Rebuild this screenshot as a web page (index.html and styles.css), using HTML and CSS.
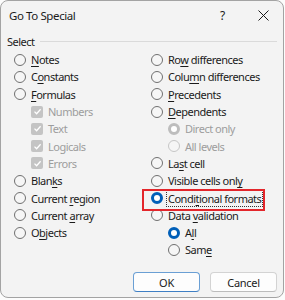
FILE: index.html
```html
<!DOCTYPE html>
<html>
<head>
<meta charset="utf-8">
<link rel="stylesheet" href="styles.css">
</head>
<body>
<div class="dialog">
  <div class="titlebar">
    <span class="title">Go To Special</span>
    <span class="help">?</span>
    <span class="close"><svg width="11" height="11" viewBox="0 0 11 11"><path d="M0.5 0.5L10.5 10.5M10.5 0.5L0.5 10.5" stroke="#1a1a1a" stroke-width="1"/></svg></span>
  </div>
  <div class="group-label"><span>Select</span><span class="rule"></span></div>
  <div class="columns">
    <div class="col">
      <div class="row"><span class="radio"></span><span class="lbl"><u>N</u>otes</span></div>
      <div class="row"><span class="radio"></span><span class="lbl">C<u>o</u>nstants</span></div>
      <div class="row"><span class="radio"></span><span class="lbl"><u>F</u>ormulas</span></div>
      <div class="row sub"><span class="check"><svg width="9" height="9" viewBox="0 0 9 9"><path d="M1.5 4.6L3.6 6.7L7.6 2.3" fill="none" stroke="#fff" stroke-width="1.3"/></svg></span><span class="lbl dis">Numbers</span></div>
      <div class="row sub"><span class="check"><svg width="9" height="9" viewBox="0 0 9 9"><path d="M1.5 4.6L3.6 6.7L7.6 2.3" fill="none" stroke="#fff" stroke-width="1.3"/></svg></span><span class="lbl dis">Text</span></div>
      <div class="row sub"><span class="check"><svg width="9" height="9" viewBox="0 0 9 9"><path d="M1.5 4.6L3.6 6.7L7.6 2.3" fill="none" stroke="#fff" stroke-width="1.3"/></svg></span><span class="lbl dis">Logicals</span></div>
      <div class="row sub"><span class="check"><svg width="9" height="9" viewBox="0 0 9 9"><path d="M1.5 4.6L3.6 6.7L7.6 2.3" fill="none" stroke="#fff" stroke-width="1.3"/></svg></span><span class="lbl dis">Errors</span></div>
      <div class="row"><span class="radio"></span><span class="lbl">Blan<u>k</u>s</span></div>
      <div class="row"><span class="radio"></span><span class="lbl">Current <u>r</u>egion</span></div>
      <div class="row"><span class="radio"></span><span class="lbl">Current <u>a</u>rray</span></div>
      <div class="row"><span class="radio"></span><span class="lbl">O<u>b</u>jects</span></div>
    </div>
    <div class="col">
      <div class="row"><span class="radio"></span><span class="lbl">Ro<u>w</u> differences</span></div>
      <div class="row"><span class="radio"></span><span class="lbl">Colu<u>m</u>n differences</span></div>
      <div class="row"><span class="radio"></span><span class="lbl"><u>P</u>recedents</span></div>
      <div class="row"><span class="radio"></span><span class="lbl"><u>D</u>ependents</span></div>
      <div class="row sub"><span class="radio dis-on"></span><span class="lbl dis">Direct only</span></div>
      <div class="row sub"><span class="radio dis-off"></span><span class="lbl dis">All levels</span></div>
      <div class="row"><span class="radio"></span><span class="lbl">La<u>s</u>t cell</span></div>
      <div class="row"><span class="radio"></span><span class="lbl">Visible cells onl<u>y</u></span></div>
      <div class="row highlight"><span class="radio on"></span><span class="lbl focus">Condi<u>t</u>ional formats</span></div>
      <div class="row"><span class="radio"></span><span class="lbl">Data <u>v</u>alidation</span></div>
      <div class="row sub"><span class="radio on"></span><span class="lbl">A<u>l</u>l</span></div>
      <div class="row sub"><span class="radio"></span><span class="lbl">Sam<u>e</u></span></div>
    </div>
  </div>
  <div class="buttons">
    <button class="btn primary">OK</button>
    <button class="btn">Cancel</button>
  </div>
</div>
</body>
</html>
```

FILE: styles.css
```css
* { box-sizing: border-box; }
html, body { margin: 0; padding: 0; background: #fcfcfc; }
body {
  font-family: "Noto Sans", "Open Sans", sans-serif;
  font-size: 11px;
  letter-spacing: -0.5px;
  color: #1b1b1b;
}
.dialog {
  width: 284px;
  height: 298px;
  border: 1px solid #a3a3a3;
  border-radius: 8px;
  background: #f3f3f3;
  display: flex;
  flex-direction: column;
  overflow: hidden;
}
.titlebar {
  height: 28px;
  display: flex;
  align-items: center;
  padding-left: 8px;
  font-size: 11.5px;
  letter-spacing: -0.4px;
}
.title { flex: 1; }
.help { width: 14px; margin-right: 24px; font-size: 12px; }
.close { width: 11px; height: 11px; margin-right: 14px; display: flex; }
.group-label {
  display: flex;
  align-items: center;
  gap: 5px;
  margin-left: 6px;
  margin-right: 6px;
  height: 24px;
}
.rule { flex: 1; height: 1px; background: #dadada; }
.columns {
  display: grid;
  grid-template-columns: 137px 1fr;
  padding-left: 13px;
  margin-top: -2px;
}
.row {
  height: 17.3px;
  display: flex;
  align-items: center;
  gap: 5px;
  white-space: nowrap;
}
.row.sub { padding-left: 17px; }
.lbl u { text-decoration-thickness: 1px; text-underline-offset: 2px; }
.lbl.dis { color: #9d9d9d; }
.radio {
  width: 12px;
  height: 12px;
  border-radius: 50%;
  border: 1px solid #707070;
  background: #f6f6f6;
  flex: none;
}
.radio.on {
  border: 3.5px solid #005fb8;
  background: #fff;
}
.radio.dis-on {
  border: 3.5px solid #bdbdbd;
  background: #fff;
}
.radio.dis-off {
  border: 1px solid #c6c6c6;
  background: #f6f6f6;
}
.check {
  width: 12px;
  height: 12px;
  border-radius: 2px;
  background: #c4c4c4;
  display: flex;
  align-items: center;
  justify-content: center;
  flex: none;
}
.row.highlight { position: relative; }
.row.highlight::after {
  content: "";
  position: absolute;
  left: -9px;
  top: 0;
  width: 119px;
  height: 18px;
  border: 2px solid #e3262b;
}
.lbl.focus {
  outline: 1px dotted #333;
  outline-offset: 0;
  padding: 0 1px;
  margin-left: -1px;
}
.buttons {
  margin-top: auto;
  display: flex;
  justify-content: flex-end;
  gap: 10px;
  padding-right: 6px;
  padding-bottom: 5px;
}
.btn {
  font-family: inherit;
  font-size: 11px;
  letter-spacing: -0.3px;
  color: #1b1b1b;
  width: 67px;
  height: 20px;
  background: #fdfdfd;
  border: 1px solid #d3d3d3;
  border-bottom-color: #bcbcbc;
  border-radius: 4px;
  padding: 0;
}
.btn.primary { border-color: #6a9fd4; border-bottom-color: #3f7fc4; }
```
